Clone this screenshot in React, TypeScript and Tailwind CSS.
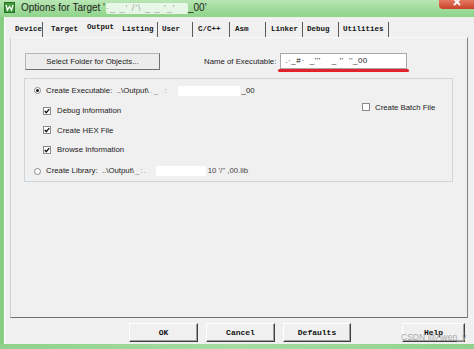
import React from "react";

/* Keil "Options for Target" dialog, Output tab */

const TABS = [
  { label: "Device", cls: "w-[32px] pl-[4px] border-r border-[#5a5a5a]" },
  { label: "Target", cls: "w-[40px] pl-[8px]" },
  { label: "Output", cls: "w-[37px] pl-[4px]", active: true },
  { label: "Listing", cls: "w-[38px] pl-[2px] border-r border-[#5a5a5a]" },
  { label: "User", cls: "w-[35px] pl-[4px] border-r border-[#5a5a5a]" },
  { label: "C/C++", cls: "w-[37px] pl-[5px] border-r border-[#5a5a5a]" },
  { label: "Asm", cls: "w-[36px] pl-[5px] border-r border-[#5a5a5a]" },
  { label: "Linker", cls: "w-[37px] pl-[5px] border-r border-[#5a5a5a]" },
  { label: "Debug", cls: "w-[36px] pl-[4px] border-r border-[#5a5a5a]" },
  { label: "Utilities", cls: "w-[50px] pl-[4px] border-r border-[#5a5a5a]" },
];

const mono = "font-['Liberation_Mono',monospace] font-bold";

function Radio({ on }: { on?: boolean }) {
  return (
    <span className="flex h-[7px] w-[7px] shrink-0 items-center justify-center rounded-full border border-[#8a8a8a] bg-white">
      {on && <span className="h-[3px] w-[3px] rounded-full bg-[#1a1a1a]" />}
    </span>
  );
}

function Check({ on }: { on?: boolean }) {
  return (
    <span className="flex h-[8px] w-[8px] shrink-0 items-center justify-center border border-[#8a8a8a] bg-white">
      {on && (
        <svg viewBox="0 0 8 8" className="h-[6px] w-[6px]">
          <path d="M1 4 L3 6.2 L7 1.5" fill="none" stroke="#111" strokeWidth="1.8" />
        </svg>
      )}
    </span>
  );
}

function Button({ label, cls }: { label: string; cls: string }) {
  return (
    <div
      className={`flex h-[19px] items-center justify-center border border-t-white border-l-white border-r-[#404040] border-b-[#404040] bg-[#f0f0f0] text-[8px] text-[#111] shadow-[inset_-1px_-1px_0_#a0a0a0] ${mono} ${cls}`}
    >
      {label}
    </div>
  );
}

export default function App() {
  return (
    <div className="relative flex h-[349px] w-[474px] flex-col overflow-hidden bg-[#86cf82] font-['Liberation_Sans',Arial,sans-serif] text-[#1a1a1a]">
      {/* title bar */}
      <div className="flex h-[17px] items-start bg-gradient-to-b from-[#b9e6b4] via-[#a2dc9c] to-[#8ed48a]">
        <svg viewBox="0 0 11 11" className="ml-[4px] mt-[2px] h-[11px] w-[11px]">
          <rect x="0.5" y="0.5" width="10" height="10" fill="#3f9a3a" stroke="#2a6f27" />
          <path d="M2 3 L3.5 8 L5.5 4.5 L7.5 8 L9 3" fill="none" stroke="#fff" strokeWidth="1.3" />
        </svg>
        <div className="ml-[6px] mt-[2px] flex h-[12px] items-center whitespace-nowrap text-[10px] leading-[12px] text-[#1c1c1c]">
          <span>Options for Target '</span>
          <span className="ml-[1px] h-[11px] w-[82px] overflow-hidden rounded-[2px] bg-white/75 text-[9px] leading-[11px] tracking-[1px] text-[#9aa59a]">
            ·_ _' /'\ _ _ '_'
          </span>
          <span>_00'</span>
        </div>
        <div className="ml-auto flex h-[9px] w-[35px] items-start justify-center rounded-bl-[4px] bg-gradient-to-b from-[#e47a62] to-[#c8402a]">
          <svg viewBox="0 0 8 8" className="-mt-[2px] h-[8px] w-[8px]">
            <path d="M1 1 L7 7 M7 1 L1 7" stroke="#fff" strokeWidth="1.8" />
          </svg>
        </div>
      </div>

      {/* dialog body */}
      <div className="ml-[4px] flex flex-1 flex-col border-l border-l-white bg-[#f0f0f0]">
        {/* tabs */}
        <div className={`ml-[6px] mt-[5px] flex h-[15px] items-stretch text-[7.5px] text-[#151515] ${mono}`}>
          {TABS.map((t) => (
            <div key={t.label} className={`flex items-center ${t.cls}`}>
              <span className={t.active ? "-mt-[3px]" : ""}>{t.label}</span>
            </div>
          ))}
        </div>

        {/* tab panel */}
        <div className="ml-[5px] flex h-[281px] w-[458px] flex-col border border-t-[#fafafa] border-l-[#d0d0d0] border-r-[#808080] border-b-[#707070]">
          <div className="ml-[14px] mt-[15px] flex items-center text-[7.8px]">
            <div className="flex h-[17px] w-[135px] items-center justify-center border border-[#b5b5b5] border-r-[#707070] border-b-[#707070] bg-[#ececec]">
              Select Folder for Objects...
            </div>
            <span className="ml-[44px]">Name of Executable:</span>
            <div className="relative ml-[4px] -mt-[2px]">
              <div className="flex h-[16px] w-[127px] items-center whitespace-pre border border-[#a8a8a8] bg-white pl-[4px] text-[8px] tracking-[0.5px]">
                {".·_#·  _'''    _ ''  ''_00"}
              </div>
              <div className="absolute -bottom-[3px] -left-[2px] -right-[2px] h-[3px] rounded-full bg-[#e2232b]" />
            </div>
          </div>

          {/* output group */}
          <div className="ml-[13px] mt-[8px] flex h-[104px] w-[429px] border border-[#cdd5da] text-[7.8px]">
            <div className="flex flex-1 flex-col pl-[9px] pt-[2px]">
              <div className="flex h-[20px] items-center gap-[5px]">
                <Radio on />
                <span className="whitespace-pre">Create Executable:  {"..\\Output\\"}</span>
                <span className="-ml-[4px] tracking-[2px] text-[#8c8c8c]">._ :</span>
                <span className="ml-[4px] h-[10px] w-[62px] bg-white" />
                <span className="-ml-[3px]">_00</span>
              </div>
              <div className="ml-[9px] flex h-[20px] items-center gap-[6px]">
                <Check on />
                <span>Debug Information</span>
              </div>
              <div className="ml-[9px] flex h-[20px] items-center gap-[6px]">
                <Check on />
                <span>Create HEX File</span>
              </div>
              <div className="ml-[9px] flex h-[20px] items-center gap-[6px]">
                <Check on />
                <span>Browse Information</span>
              </div>
              <div className="mt-[1px] flex h-[20px] items-center gap-[5px]">
                <Radio />
                <span className="whitespace-pre">Create Library:  {"..\\Output\\"}</span>
                <span className="-ml-[4px] tracking-[1px] text-[#8c8c8c]">_:.</span>
                <span className="ml-[4px] h-[10px] w-[50px] bg-white" />
                <span className="-ml-[3px] text-[#444]">10 '/'' ,00.lib</span>
              </div>
            </div>
            <div className="flex w-[90px] items-start gap-[5px] pt-[24px]">
              <Check />
              <span className="-mt-[1px]">Create Batch File</span>
            </div>
          </div>
        </div>

        {/* dialog buttons */}
        <div className="ml-[124px] mt-[5px] flex">
          <Button label="OK" cls="w-[69px]" />
          <Button label="Cancel" cls="ml-[8px] w-[69px]" />
          <Button label="Defaults" cls="ml-[8px] w-[68px]" />
          <Button label="Help" cls="ml-[51px] w-[63px]" />
        </div>
      </div>

      {/* bottom frame */}
      <div className="h-[5px] bg-gradient-to-r from-[#8fd18b] via-[#a6dca2] to-[#8fd18b]" />

      {/* watermark */}
      <span className="absolute left-[401px] top-[331px] text-[8.5px] text-[#a8a8a8]">CSDN @Awen_y</span>
    </div>
  );
}
